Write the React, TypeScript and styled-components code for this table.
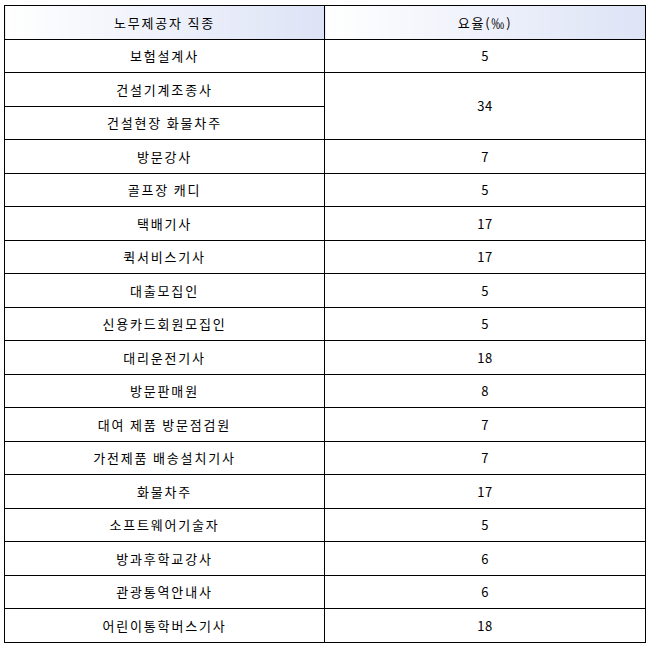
import React from "react";
import styled, { createGlobalStyle } from "styled-components";

const Global = createGlobalStyle`
  html, body { margin: 0; padding: 0; background: #fff; }
  body { font-family: "Noto Sans CJK KR", "Noto Sans", sans-serif; }
`;

const Page = styled.div`
  padding: 5px 0 0 4px;
`;

const Table = styled.table`
  border-collapse: collapse;
  width: 642px;
  table-layout: fixed;
  font-family: "Noto Sans CJK KR", "Noto Sans", sans-serif;
  font-size: 13px;
  line-height: 16px;
  color: #000;
`;

const Th = styled.th`
  height: 33px;
  padding: 0;
  border: 1px solid #000;
  font-weight: normal;
  letter-spacing: 1.8px;
  text-align: center;
  background: linear-gradient(to right, #ffffff 0%, #dde3f6 100%);
`;

const Td = styled.td<{ $tall: boolean }>`
  height: ${(p) => (p.$tall ? 33 : 32)}px;
  padding: 0;
  border: 1px solid #000;
  text-align: center;
  letter-spacing: 1.8px;
`;

const RateTd = styled(Td)`
  letter-spacing: 0.5px;
`;

type Row = { job: string; rate?: string; span?: number };

const rows: Row[] = [
  { job: "보험설계사", rate: "5" },
  { job: "건설기계조종사", rate: "34", span: 2 },
  { job: "건설현장 화물차주" },
  { job: "방문강사", rate: "7" },
  { job: "골프장 캐디", rate: "5" },
  { job: "택배기사", rate: "17" },
  { job: "퀵서비스기사", rate: "17" },
  { job: "대출모집인", rate: "5" },
  { job: "신용카드회원모집인", rate: "5" },
  { job: "대리운전기사", rate: "18" },
  { job: "방문판매원", rate: "8" },
  { job: "대여 제품 방문점검원", rate: "7" },
  { job: "가전제품 배송설치기사", rate: "7" },
  { job: "화물차주", rate: "17" },
  { job: "소프트웨어기술자", rate: "5" },
  { job: "방과후학교강사", rate: "6" },
  { job: "관광통역안내사", rate: "6" },
  { job: "어린이통학버스기사", rate: "18" },
];

export default function App() {
  return (
    <>
      <Global />
      <Page>
        <Table>
          <colgroup>
            <col style={{ width: 320 }} />
            <col style={{ width: 321 }} />
          </colgroup>
          <thead>
            <tr>
              <Th>노무제공자 직종</Th>
              <Th>요율(‰)</Th>
            </tr>
          </thead>
          <tbody>
            {rows.map((r, i) => {
              const tall = i % 2 === 1;
              return (
                <tr key={i}>
                  <Td $tall={tall}>{r.job}</Td>
                  {r.rate !== undefined && (
                    <RateTd $tall={tall} rowSpan={r.span ?? 1}>
                      {r.rate}
                    </RateTd>
                  )}
                </tr>
              );
            })}
          </tbody>
        </Table>
      </Page>
    </>
  );
}
